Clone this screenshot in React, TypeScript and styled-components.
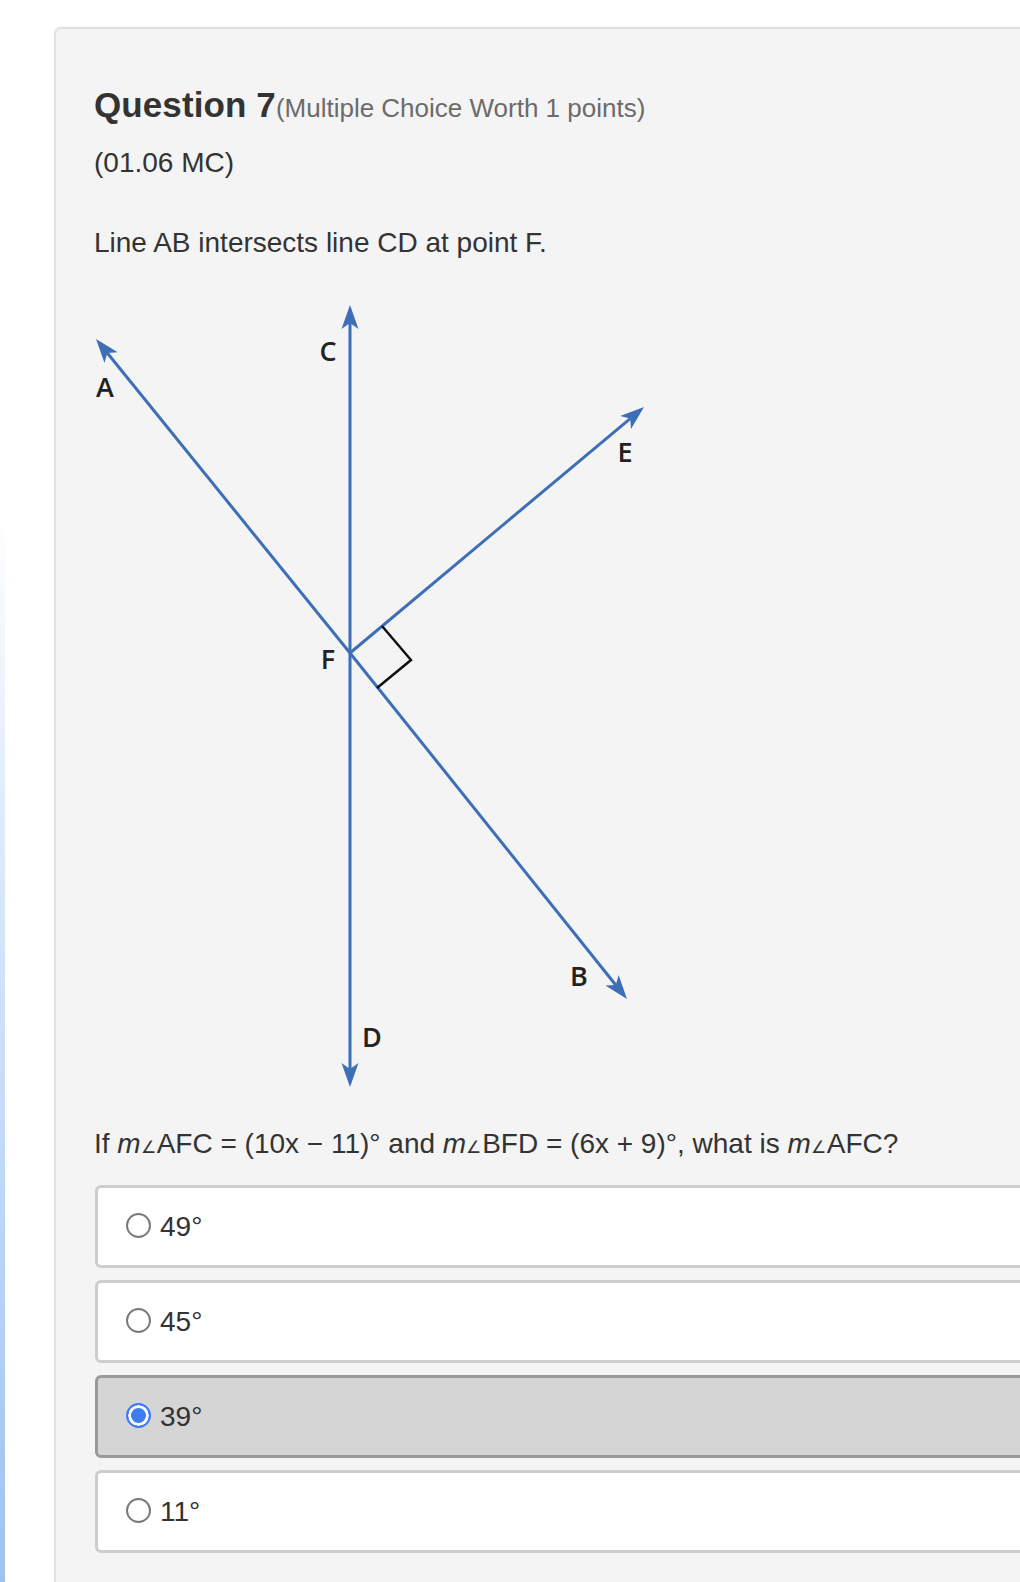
import React, { useState } from 'react'
import styled, { createGlobalStyle } from 'styled-components'

const GlobalStyle = createGlobalStyle`
  html, body {
    margin: 0;
    padding: 0;
    background: #ffffff;
    overflow: hidden;
  }
  body {
    font-family: 'Liberation Sans', Arial, Helvetica, sans-serif;
    color: #333333;
  }
`

const SideGlow = styled.div`
  position: fixed;
  left: 0;
  top: 0;
  width: 5px;
  height: 100%;
  background: linear-gradient(to bottom, rgba(170, 205, 245, 0) 0%, rgba(170, 205, 245, 0) 32%, #d9e8fb 55%, #9fc2ef 100%);
`

const Page = styled.div`
  padding: 27px 0 0 54px;
  min-height: 1582px;
  box-sizing: border-box;
`

const Card = styled.section`
  width: 1100px;
  min-height: 1600px;
  box-sizing: border-box;
  background: #f4f4f4;
  border: 2px solid #e1e1e1;
  border-right: none;
  border-radius: 7px 0 0 0;
  box-shadow: 0 -1px 2px rgba(0, 0, 0, 0.04);
  padding: 55px 40px 40px 38px;
`

const Title = styled.h2`
  margin: 0;
  font-size: 35px;
  line-height: 42px;
  font-weight: 700;
  color: #333333;
  letter-spacing: 0.1px;
`

const TitleNote = styled.span`
  font-size: 26px;
  font-weight: 400;
  color: #6b6b6b;
  letter-spacing: 0;
`

const Paragraph = styled.p<{ gap: number }>`
  margin: ${({ gap }) => gap}px 0 0 0;
  font-size: 28px;
  line-height: 36px;
  color: #333333;
`

const Var = styled.i`
  font-style: italic;
`

const AngleSign = styled.span`
  font-size: 0.62em;
  margin-right: 1px;
`

const Diagram = styled.svg`
  display: block;
  margin-top: 32px;
  overflow: visible;
`

const Label = styled.text`
  font-family: 'Open Sans', 'DejaVu Sans', sans-serif;
  font-size: 27px;
  font-weight: 600;
  fill: #222222;
`

const Options = styled.div`
  margin-top: 20px;
  display: flex;
  flex-direction: column;
  gap: 12px;
  margin-left: 1px;
`

const Option = styled.label<{ selected: boolean }>`
  display: flex;
  align-items: center;
  gap: 9px;
  height: 83px;
  box-sizing: border-box;
  padding: 0 0 0 28px;
  border: 3px solid ${({ selected }) => (selected ? '#9a9a9a' : '#cdcdcd')};
  border-radius: 6px;
  background: ${({ selected }) => (selected ? '#d5d5d5' : '#ffffff')};
  font-size: 28px;
  color: #333333;
  cursor: pointer;
`

const Radio = styled.input`
  appearance: none;
  margin: 0;
  width: 25px;
  height: 25px;
  border-radius: 50%;
  border: 2px solid #7a7a7a;
  background: #ffffff;
  box-sizing: border-box;
  flex: none;
  position: relative;
  top: -1px;

  &:checked {
    border-color: #3d7cf2;
    background: #3d7cf2;
    box-shadow: inset 0 0 0 3px #ffffff;
  }
`

const BLUE = '#3e6eb7'

type Pt = [number, number]

const ArrowLine = ({ from, to }: { from: Pt; to: Pt }) => {
  const dx = to[0] - from[0]
  const dy = to[1] - from[1]
  const len = Math.hypot(dx, dy)
  const ux = dx / len
  const uy = dy / len
  const nx = -uy
  const ny = ux
  const L = 24
  const W = 8.5
  const notch = 6
  const bx = to[0] - ux * L
  const by = to[1] - uy * L
  const mx = to[0] - ux * (L - notch)
  const my = to[1] - uy * (L - notch)
  const head = [
    `${to[0]},${to[1]}`,
    `${bx + nx * W},${by + ny * W}`,
    `${mx},${my}`,
    `${bx - nx * W},${by - ny * W}`,
  ].join(' ')
  return (
    <g>
      <line x1={from[0]} y1={from[1]} x2={mx} y2={my} stroke={BLUE} strokeWidth={3} />
      <polygon points={head} fill={BLUE} />
    </g>
  )
}

const F: Pt = [256, 360]

// label centres, nudged to sit where the reference letters sit
const LABELS: { t: string; x: number; y: number }[] = [
  { t: 'C', x: 234, y: 57 },
  { t: 'A', x: 11, y: 93 },
  { t: 'E', x: 531, y: 158 },
  { t: 'F', x: 234, y: 365 },
  { t: 'B', x: 485, y: 682 },
  { t: 'D', x: 278, y: 743 },
]

const Figure = () => (
  <Diagram width={620} height={800} viewBox="0 0 620 800">
    {/* line CD */}
    <ArrowLine from={F} to={[256, 12]} />
    <ArrowLine from={F} to={[256, 794]} />
    {/* line AB */}
    <ArrowLine from={F} to={[2, 46]} />
    <ArrowLine from={F} to={[533, 706]} />
    {/* ray FE */}
    <ArrowLine from={F} to={[550, 114]} />
    {/* right angle mark */}
    <polyline points="288,333 317,367 283,395" fill="none" stroke="#111111" strokeWidth={2.5} />
    {LABELS.map((l) => (
      <Label key={l.t} x={l.x} y={l.y} textAnchor="middle" dominantBaseline="central">
        {l.t}
      </Label>
    ))}
  </Diagram>
)

const CHOICES = ['49°', '45°', '39°', '11°']

const App: React.FC = () => {
  const [picked, setPicked] = useState('39°')

  return (
    <>
      <GlobalStyle />
      <SideGlow />
      <Page>
        <Card>
          <Title>
            Question 7<TitleNote>(Multiple Choice Worth 1 points)</TitleNote>
          </Title>
          <Paragraph gap={16}>(01.06 MC)</Paragraph>
          <Paragraph gap={44}>Line AB intersects line CD at point F.</Paragraph>
          <Figure />
          <Paragraph gap={33}>
            If <Var>m</Var>
            <AngleSign>∠</AngleSign>AFC = (10x − 11)° and <Var>m</Var>
            <AngleSign>∠</AngleSign>BFD = (6x + 9)°, what is <Var>m</Var>
            <AngleSign>∠</AngleSign>AFC?
          </Paragraph>
          <Options>
            {CHOICES.map((choice) => (
              <Option key={choice} selected={picked === choice}>
                <Radio
                  type="radio"
                  name="q7"
                  checked={picked === choice}
                  onChange={() => setPicked(choice)}
                />
                {choice}
              </Option>
            ))}
          </Options>
        </Card>
      </Page>
    </>
  )
}

export default App
